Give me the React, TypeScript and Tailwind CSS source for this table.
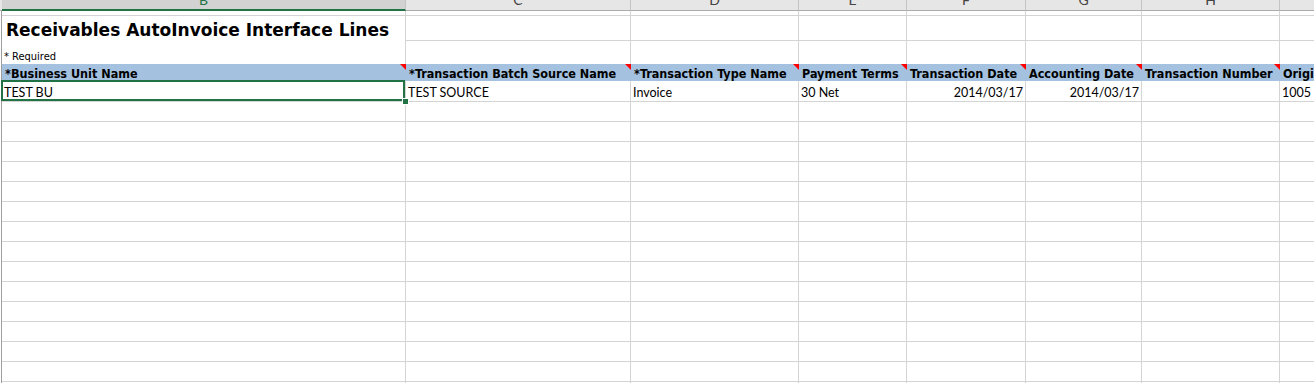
import React from "react";

type Col = { key: string; w: string; head: string; label: string; data?: string; right?: boolean };

const cols: Col[] = [
  { key: "B", w: "w-[404px]", head: "B", label: "*Business Unit Name", data: "TEST BU" },
  { key: "C", w: "w-[225px]", head: "C", label: "*Transaction Batch Source Name", data: "TEST SOURCE" },
  { key: "D", w: "w-[168px]", head: "D", label: "*Transaction Type Name", data: "Invoice" },
  { key: "E", w: "w-[108px]", head: "E", label: "Payment Terms", data: "30 Net" },
  { key: "F", w: "w-[119px]", head: "F", label: "Transaction Date", data: "2014/03/17", right: true },
  { key: "G", w: "w-[116px]", head: "G", label: "Accounting Date", data: "2014/03/17", right: true },
  { key: "H", w: "w-[138px]", head: "H", label: "Transaction Number", data: "" },
  { key: "I", w: "w-[220px]", head: "I", label: "Original System Bill-to Customer Reference", data: "1005" },
];

const headFont = "font-['DejaVu_Sans_Condensed','DejaVu_Sans',sans-serif]";
const titleFont = "font-['DejaVu_Sans',sans-serif]";
const cellFont = "font-['Lato','Liberation_Sans',sans-serif]";

function Triangle() {
  return (
    <svg className="absolute right-0 top-0" width="6" height="6" viewBox="0 0 6 6">
      <polygon points="0,0 6,0 6,6" fill="#ff0000" />
    </svg>
  );
}

function Gutter({ h }: { h: string }) {
  return <div className={`${h} w-[2px] shrink-0 border-r border-[#9e9e9e] bg-white`} />;
}

export default function App() {
  const emptyRows = Array.from({ length: 15 });
  return (
    <div className="w-[1314px] h-[383px] overflow-hidden bg-white text-black">
      {/* column letters */}
      <div className="flex h-[11px]">
        <div className="h-[11px] w-[2px] shrink-0 bg-[#e6e6e6] border-b border-[#ababab]" />
        {cols.map((c) => (
          <div
            key={c.key}
            className={`${c.w} shrink-0 h-[11px] overflow-hidden flex justify-center border-r border-[#c4c4c4] ${
              c.key === "B"
                ? "bg-[#d2d2d2] border-b-2 border-b-[#217346] text-[#217346]"
                : "bg-[#e6e6e6] border-b border-b-[#ababab] text-[#444444]"
            }`}
          >
            <span className={`${cellFont} text-[14px] leading-[14px] mt-[-7px]`}>{c.head}</span>
          </div>
        ))}
      </div>

      {/* spacer row */}
      <div className="flex h-[5px]">
        <Gutter h="h-[5px]" />
        {cols.map((c) => (
          <div key={c.key} className={`${c.w} shrink-0 h-[5px] border-r border-b border-[#d4d4d4]`} />
        ))}
      </div>

      {/* title row */}
      <div className="flex h-[25px]">
        <Gutter h="h-[25px]" />
        {cols.map((c) => (
          <div
            key={c.key}
            className={`${c.w} shrink-0 h-[25px] border-r border-[#d4d4d4] ${c.key === "B" ? "" : "border-b"}`}
          >
            {c.key === "B" && (
              <div className={`${titleFont} font-bold text-[17px] leading-[20px] pt-[4px] pl-[4px] whitespace-nowrap`}>
                Receivables AutoInvoice Interface Lines
              </div>
            )}
          </div>
        ))}
      </div>

      {/* required row */}
      <div className="flex h-[23px]">
        <Gutter h="h-[23px]" />
        {cols.map((c) => (
          <div key={c.key} className={`${c.w} shrink-0 h-[23px] border-r border-[#d4d4d4]`}>
            {c.key === "B" && (
              <div className={`${headFont} text-[11px] leading-[13px] pt-[9px] pl-[2px] whitespace-nowrap`}>
                * Required
              </div>
            )}
          </div>
        ))}
      </div>

      {/* header row */}
      <div className="flex h-[17px]">
        <Gutter h="h-[17px]" />
        {cols.map((c) => (
          <div key={c.key} className={`${c.w} shrink-0 h-[17px] relative bg-[#a4c2df] overflow-hidden`}>
            <div className={`${headFont} font-bold text-[12.5px] leading-[17px] pt-[1px] pl-[3px] whitespace-nowrap`}>
              {c.label}
            </div>
            {c.key !== "I" && <Triangle />}
          </div>
        ))}
      </div>

      {/* data row */}
      <div className="flex h-[21px] relative">
        <Gutter h="h-[21px]" />
        {cols.map((c) => (
          <div
            key={c.key}
            className={`${c.w} shrink-0 h-[21px] border-r border-b border-[#d4d4d4] overflow-hidden ${
              c.right ? "text-right pr-[2px]" : "pl-[2px]"
            }`}
          >
            <div className={`${cellFont} text-[12.5px] leading-[20px] pt-[2px] whitespace-nowrap`}>{c.data}</div>
          </div>
        ))}
        {/* selection */}
        <div className="absolute left-[1px] top-[-1px] w-[404px] h-[21px] border-2 border-[#217346] pointer-events-none" />
        <div className="absolute left-[402px] top-[17px] w-[7px] h-[7px] bg-[#217346] border border-white" />
      </div>

      {/* empty rows */}
      {emptyRows.map((_, i) => (
        <div key={i} className="flex h-[20px]">
          <Gutter h="h-[20px]" />
          {cols.map((c) => (
            <div key={c.key} className={`${c.w} shrink-0 h-[20px] border-r border-b border-[#d4d4d4]`} />
          ))}
        </div>
      ))}
    </div>
  );
}
